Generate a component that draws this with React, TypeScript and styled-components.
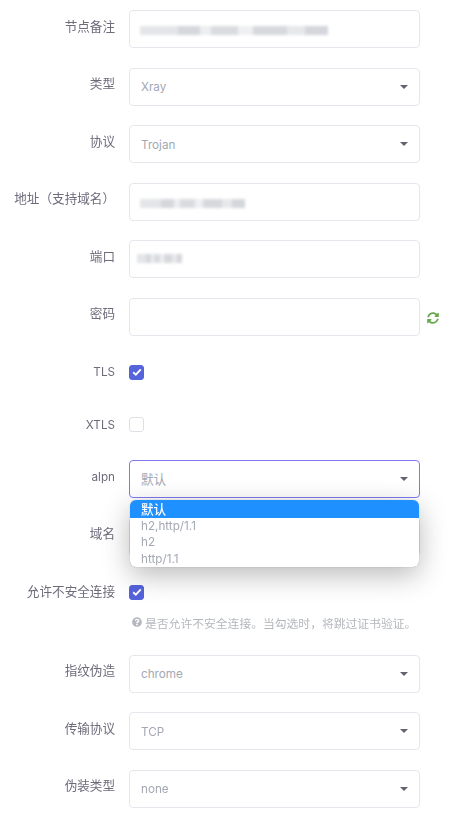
import React from 'react';
import styled, { createGlobalStyle } from 'styled-components';
import { FaQuestionCircle, FaSyncAlt } from 'react-icons/fa';

const GlobalStyle = createGlobalStyle`
  html, body {
    margin: 0;
    padding: 0;
    background: #fff;
  }
`;

const Page = styled.div`
  width: 474px;
  height: 833px;
  overflow: hidden;
  padding-top: 10px;
  box-sizing: border-box;
  font-family: Inter, "Noto Sans CJK SC", sans-serif;
  font-size: 12.6px;
  color: #6e6b7b;
  filter: blur(0.35px);
`;

const Row = styled.div<{ $tight?: boolean }>`
  display: flex;
  align-items: flex-start;
  margin-bottom: ${(p) => (p.$tight ? 0 : 19.5)}px;
`;

const Label = styled.label<{ $latin?: boolean }>`
  flex: none;
  width: 115px;
  margin-right: 14px;
  padding-top: 7.5px;
  line-height: 18px;
  text-align: right;
  white-space: nowrap;
  font-size: ${(p) => (p.$latin ? 11.7 : 12.6)}px;
`;

const CheckLabel = styled(Label)`
  padding-top: 8px;
`;

const Control = styled.div<{ $focused?: boolean }>`
  position: relative;
  flex: none;
  width: 290.5px;
  height: 38px;
  box-sizing: border-box;
  display: flex;
  align-items: center;
  justify-content: space-between;
  padding: 0 11px;
  background: #fff;
  border: 1px solid ${(p) => (p.$focused ? '#7f78ee' : '#e6e6ec')};
  border-radius: 4px;
  color: #a3a8b3;
`;

const Value = styled.span<{ $latin?: boolean }>`
  line-height: 18px;
  padding-top: 1px;
  font-size: ${(p) => (p.$latin ? 11.7 : 12.6)}px;
`;

const Caret = styled.span`
  width: 0;
  height: 0;
  border-left: 4px solid transparent;
  border-right: 4px solid transparent;
  border-top: 4px solid #63636e;
`;

const Smudge = styled.div<{ $width: number; $left: number; $top: number }>`
  height: 9px;
  width: ${(p) => p.$width}px;
  margin-left: ${(p) => p.$left}px;
  margin-top: ${(p) => p.$top}px;
  background: linear-gradient(
    90deg,
    #e3e5e8 0 20%,
    #d4d7dc 20% 32%,
    #eceef0 32% 38%,
    #d9dbdf 38% 52%,
    #eff0f2 52% 60%,
    #d6d8dd 60% 78%,
    #e6e8ea 78% 88%,
    #d4d6db 88% 100%
  );
  filter: blur(1.4px);
`;

const Refresh = styled(FaSyncAlt)`
  flex: none;
  margin-left: 7px;
  margin-top: 14px;
  font-size: 12px;
  color: #6aa84f;
`;

const CheckCell = styled.div`
  height: 33px;
  padding-top: 1px;
  box-sizing: border-box;
  display: flex;
  flex-direction: column;
  justify-content: center;
`;

const CheckBox = styled.span<{ $on?: boolean }>`
  width: 15px;
  height: 15px;
  box-sizing: border-box;
  border-radius: 3px;
  display: flex;
  align-items: center;
  justify-content: center;
  background: ${(p) => (p.$on ? '#5563dc' : '#fff')};
  border: 1px solid ${(p) => (p.$on ? '#5563dc' : '#dfe0e6')};
`;

const HelpRow = styled.div`
  margin-left: 129px;
  height: 30px;
  margin-top: -1px;
  margin-bottom: 17.5px;
  display: flex;
  align-items: center;
  padding-left: 3px;
  gap: 3px;
  font-size: 11.8px;
  white-space: nowrap;
  color: #b4b7bd;
`;

const Menu = styled.ul`
  position: absolute;
  left: 0;
  right: 0;
  top: 39px;
  z-index: 2;
  margin: 0;
  padding: 0;
  list-style: none;
  overflow: hidden;
  background: #fff;
  border-radius: 6px;
  box-shadow: 0 8px 28px rgba(0, 0, 0, 0.28), 0 0 1px rgba(0, 0, 0, 0.4);
`;

const Option = styled.li<{ $active?: boolean }>`
  height: ${(p) => (p.$active ? 18 : 16.33)}px;
  line-height: ${(p) => (p.$active ? 19 : 17)}px;
  padding-left: 11px;
  font-size: ${(p) => (p.$active ? 12.6 : 11.7)}px;
  font-weight: ${(p) => (p.$active ? 500 : 400)};
  background: ${(p) => (p.$active ? '#1e90ff' : 'transparent')};
  color: ${(p) => (p.$active ? '#fff' : '#a3a8b3')};
`;

const Check = () => (
  <svg width="10" height="8" viewBox="0 0 10 8" fill="none">
    <path d="M1.2 4.2 3.8 6.6 8.8 1.4" stroke="#fff" strokeWidth="1.9" />
  </svg>
);

function SelectField({ label, value }: { label: string; value: string }) {
  return (
    <Row>
      <Label>{label}</Label>
      <Control>
        <Value $latin>{value}</Value>
        <Caret />
      </Control>
    </Row>
  );
}

function CheckField({ label, on }: { label: string; on?: boolean }) {
  return (
    <Row>
      <CheckLabel $latin>{label}</CheckLabel>
      <CheckCell>
        <CheckBox $on={on}>{on && <Check />}</CheckBox>
      </CheckCell>
    </Row>
  );
}

export default function App() {
  return (
    <Page>
      <GlobalStyle />
      <Row>
        <Label>节点备注</Label>
        <Control>
          <Smudge $width={188} $left={-1} $top={3} />
        </Control>
      </Row>
      <SelectField label="类型" value="Xray" />
      <SelectField label="协议" value="Trojan" />
      <Row>
        <Label>地址（支持域名）</Label>
        <Control>
          <Smudge $width={105} $left={-1} $top={3} />
        </Control>
      </Row>
      <Row>
        <Label>端口</Label>
        <Control>
          <Smudge $width={45} $left={-4} $top={-1} />
        </Control>
      </Row>
      <Row>
        <Label>密码</Label>
        <Control />
        <Refresh />
      </Row>
      <CheckField label="TLS" on />
      <CheckField label="XTLS" />
      <Row>
        <Label $latin>alpn</Label>
        <Control $focused>
          <Value>默认</Value>
          <Caret />
          <Menu>
            <Option $active>默认</Option>
            <Option>h2,http/1.1</Option>
            <Option>h2</Option>
            <Option>http/1.1</Option>
          </Menu>
        </Control>
      </Row>
      <Row>
        <Label>域名</Label>
        <Control />
      </Row>
      <Row $tight>
        <CheckLabel>允许不安全连接</CheckLabel>
        <CheckCell>
          <CheckBox $on>
            <Check />
          </CheckBox>
        </CheckCell>
      </Row>
      <HelpRow>
        <FaQuestionCircle size={10} />
        是否允许不安全连接。当勾选时，将跳过证书验证。
      </HelpRow>
      <SelectField label="指纹伪造" value="chrome" />
      <SelectField label="传输协议" value="TCP" />
      <SelectField label="伪装类型" value="none" />
    </Page>
  );
}
